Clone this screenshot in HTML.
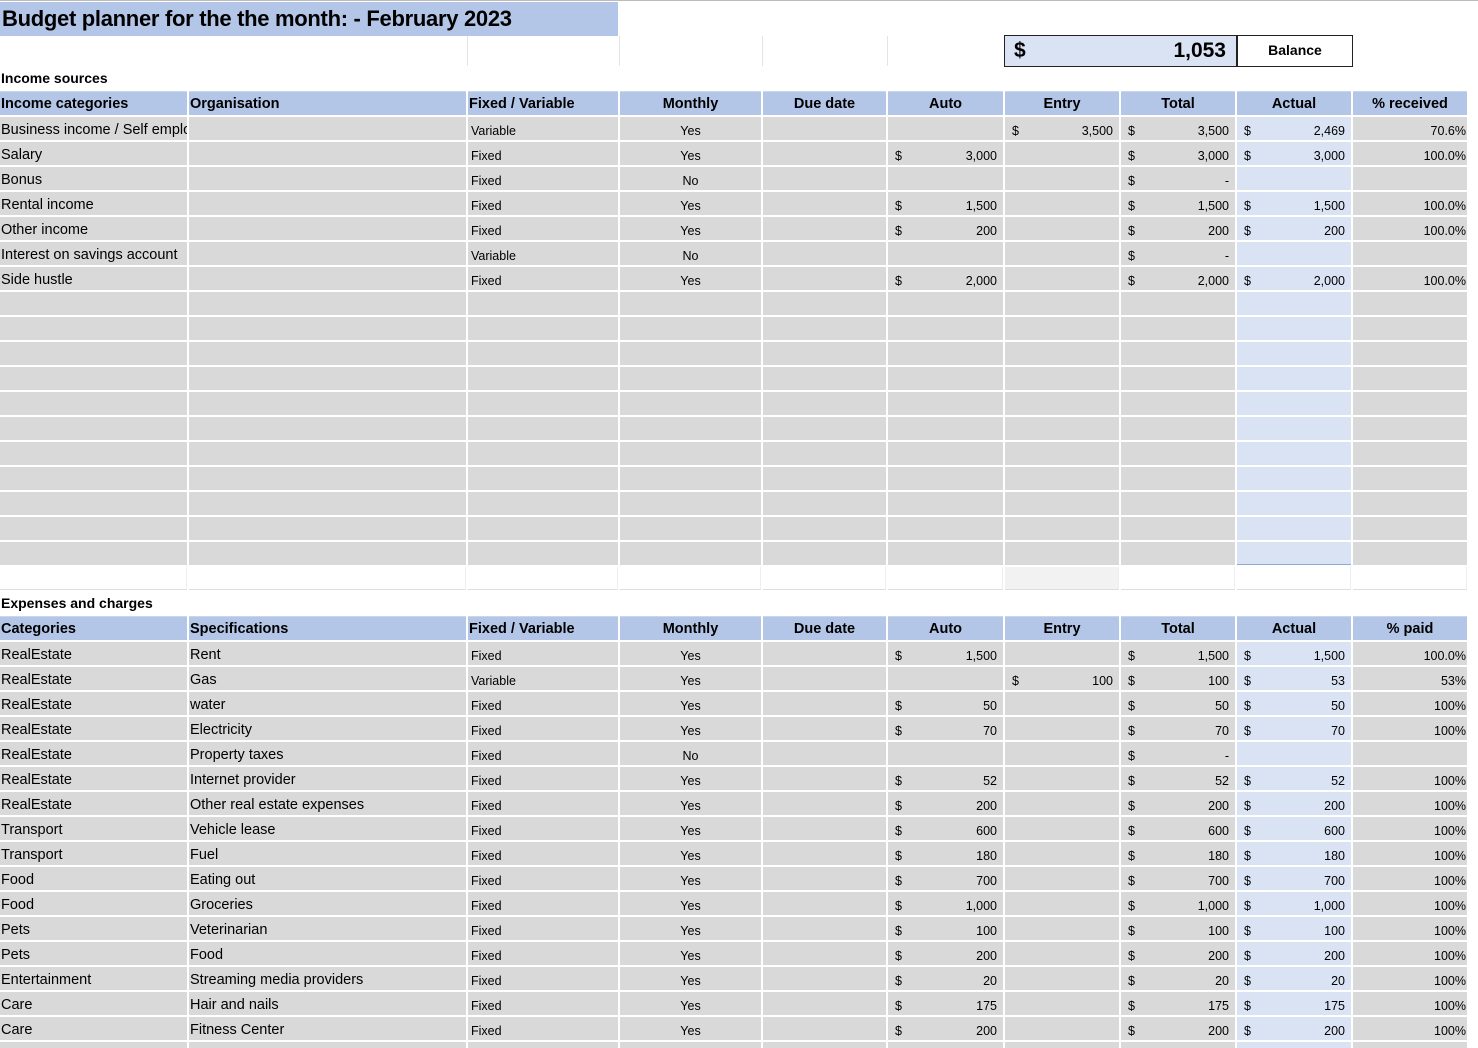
<!DOCTYPE html>
<html><head><meta charset="utf-8">
<style>
*{margin:0;padding:0;box-sizing:border-box}
html,body{width:1478px;height:1048px;overflow:hidden}
body{background:#fff;font-family:"Liberation Sans",sans-serif;color:#000;position:relative}
.title{position:absolute;left:0;top:2px;width:618px;height:34px;background:#b4c6e7;font-weight:bold;font-size:22px;line-height:34px;padding-left:2px;letter-spacing:-0.3px}
.topline{position:absolute;left:0;top:0;width:1478px;height:1px;background:#bbb}
.vl{position:absolute;top:36px;height:30px;width:1px;background:#e4e4e4}
.bal1{position:absolute;left:1004px;top:35px;width:233px;height:32px;background:#dae3f3;border:1.5px solid #222;font-weight:bold;font-size:21px;line-height:29px}
.bal1 .d{position:absolute;left:9px}
.bal1 .v{position:absolute;right:10px}
.bal2{position:absolute;left:1237px;top:35px;width:116px;height:32px;border:1.5px solid #222;font-weight:bold;font-size:14px;line-height:29px;text-align:center}
.sec{position:absolute;left:1px;font-weight:bold;font-size:14px}
table{position:absolute;left:-2px;width:1471px;border-collapse:separate;border-spacing:2px;table-layout:fixed}
td{height:23px;background:#d9d9d9;font-size:14.5px;white-space:nowrap;overflow:hidden;padding:0 1px;vertical-align:bottom;line-height:20px}
tr.h td{height:24px;background:#b4c6e7;font-weight:bold;font-size:14.5px;text-align:center;vertical-align:middle;border-top:1px solid #c9d6ee}
tr.h td.l{text-align:left}
td.s{font-size:12.5px;line-height:18px;padding-left:3px}
td.c{text-align:center;font-size:12.5px;line-height:18px}
td.a{background:#dae3f3}
td.m{font-size:12.5px;line-height:18px;padding:0 6px 0 7px}
td.m b{float:left;font-weight:normal}
td.m i{float:right;font-style:normal}
td.p{text-align:right;font-size:12.5px;line-height:18px}
tr.w td{background:#fff;border-bottom:1px solid #ddd;border-right:1px solid #eee}
</style></head><body>
<div class="topline"></div>
<div class="title">Budget planner for the the month: - February 2023</div>
<div class="vl" style="left:467px"></div><div class="vl" style="left:619px"></div><div class="vl" style="left:762px"></div><div class="vl" style="left:887px"></div>
<div class="bal1"><span class="d">$</span><span class="v">1,053</span></div>
<div class="bal2">Balance</div>
<div class="sec" style="top:70px">Income sources</div>

<table style="top:89px">
<colgroup><col style="width:187px"><col style="width:277px"><col style="width:150px"><col style="width:141px"><col style="width:123px"><col style="width:115px"><col style="width:114px"><col style="width:114px"><col style="width:114px"><col style="width:114px"></colgroup>
<tr class="h"><td class="l">Income categories</td><td class="l">Organisation</td><td class="l">Fixed / Variable</td><td>Monthly</td><td>Due date</td><td>Auto</td><td>Entry</td><td>Total</td><td>Actual</td><td>% received</td></tr>
<tr><td>Business income / Self employed</td><td></td><td class="s">Variable</td><td class="c">Yes</td><td></td><td></td><td class="m"><b>$</b><i>3,500</i></td><td class="m"><b>$</b><i>3,500</i></td><td class="m a"><b>$</b><i>2,469</i></td><td class="p">70.6%</td></tr>
<tr><td>Salary</td><td></td><td class="s">Fixed</td><td class="c">Yes</td><td></td><td class="m"><b>$</b><i>3,000</i></td><td></td><td class="m"><b>$</b><i>3,000</i></td><td class="m a"><b>$</b><i>3,000</i></td><td class="p">100.0%</td></tr>
<tr><td>Bonus</td><td></td><td class="s">Fixed</td><td class="c">No</td><td></td><td></td><td></td><td class="m"><b>$</b><i>-</i></td><td class="a"></td><td></td></tr>
<tr><td>Rental income</td><td></td><td class="s">Fixed</td><td class="c">Yes</td><td></td><td class="m"><b>$</b><i>1,500</i></td><td></td><td class="m"><b>$</b><i>1,500</i></td><td class="m a"><b>$</b><i>1,500</i></td><td class="p">100.0%</td></tr>
<tr><td>Other income</td><td></td><td class="s">Fixed</td><td class="c">Yes</td><td></td><td class="m"><b>$</b><i>200</i></td><td></td><td class="m"><b>$</b><i>200</i></td><td class="m a"><b>$</b><i>200</i></td><td class="p">100.0%</td></tr>
<tr><td>Interest on savings account</td><td></td><td class="s">Variable</td><td class="c">No</td><td></td><td></td><td></td><td class="m"><b>$</b><i>-</i></td><td class="a"></td><td></td></tr>
<tr><td>Side hustle</td><td></td><td class="s">Fixed</td><td class="c">Yes</td><td></td><td class="m"><b>$</b><i>2,000</i></td><td></td><td class="m"><b>$</b><i>2,000</i></td><td class="m a"><b>$</b><i>2,000</i></td><td class="p">100.0%</td></tr>
<tr><td></td><td></td><td></td><td></td><td></td><td></td><td></td><td></td><td class="a"></td><td></td></tr>
<tr><td></td><td></td><td></td><td></td><td></td><td></td><td></td><td></td><td class="a"></td><td></td></tr>
<tr><td></td><td></td><td></td><td></td><td></td><td></td><td></td><td></td><td class="a"></td><td></td></tr>
<tr><td></td><td></td><td></td><td></td><td></td><td></td><td></td><td></td><td class="a"></td><td></td></tr>
<tr><td></td><td></td><td></td><td></td><td></td><td></td><td></td><td></td><td class="a"></td><td></td></tr>
<tr><td></td><td></td><td></td><td></td><td></td><td></td><td></td><td></td><td class="a"></td><td></td></tr>
<tr><td></td><td></td><td></td><td></td><td></td><td></td><td></td><td></td><td class="a"></td><td></td></tr>
<tr><td></td><td></td><td></td><td></td><td></td><td></td><td></td><td></td><td class="a"></td><td></td></tr>
<tr><td></td><td></td><td></td><td></td><td></td><td></td><td></td><td></td><td class="a"></td><td></td></tr>
<tr><td></td><td></td><td></td><td></td><td></td><td></td><td></td><td></td><td class="a"></td><td></td></tr>
<tr><td></td><td></td><td></td><td></td><td></td><td></td><td></td><td></td><td class="a" style="border-bottom:1px solid #8ea9db"></td><td></td></tr>
<tr class="w"><td></td><td></td><td></td><td></td><td></td><td></td><td style="background:#f2f2f2"></td><td></td><td></td><td></td></tr>
</table>

<div class="sec" style="top:595px">Expenses and charges</div>

<table style="top:614px">
<colgroup><col style="width:187px"><col style="width:277px"><col style="width:150px"><col style="width:141px"><col style="width:123px"><col style="width:115px"><col style="width:114px"><col style="width:114px"><col style="width:114px"><col style="width:114px"></colgroup>
<tr class="h"><td class="l">Categories</td><td class="l">Specifications</td><td class="l">Fixed / Variable</td><td>Monthly</td><td>Due date</td><td>Auto</td><td>Entry</td><td>Total</td><td>Actual</td><td>% paid</td></tr>
<tr><td>RealEstate</td><td>Rent</td><td class="s">Fixed</td><td class="c">Yes</td><td></td><td class="m"><b>$</b><i>1,500</i></td><td></td><td class="m"><b>$</b><i>1,500</i></td><td class="m a"><b>$</b><i>1,500</i></td><td class="p">100.0%</td></tr>
<tr><td>RealEstate</td><td>Gas</td><td class="s">Variable</td><td class="c">Yes</td><td></td><td></td><td class="m"><b>$</b><i>100</i></td><td class="m"><b>$</b><i>100</i></td><td class="m a"><b>$</b><i>53</i></td><td class="p">53%</td></tr>
<tr><td>RealEstate</td><td>water</td><td class="s">Fixed</td><td class="c">Yes</td><td></td><td class="m"><b>$</b><i>50</i></td><td></td><td class="m"><b>$</b><i>50</i></td><td class="m a"><b>$</b><i>50</i></td><td class="p">100%</td></tr>
<tr><td>RealEstate</td><td>Electricity</td><td class="s">Fixed</td><td class="c">Yes</td><td></td><td class="m"><b>$</b><i>70</i></td><td></td><td class="m"><b>$</b><i>70</i></td><td class="m a"><b>$</b><i>70</i></td><td class="p">100%</td></tr>
<tr><td>RealEstate</td><td>Property taxes</td><td class="s">Fixed</td><td class="c">No</td><td></td><td></td><td></td><td class="m"><b>$</b><i>-</i></td><td class="a"></td><td></td></tr>
<tr><td>RealEstate</td><td>Internet provider</td><td class="s">Fixed</td><td class="c">Yes</td><td></td><td class="m"><b>$</b><i>52</i></td><td></td><td class="m"><b>$</b><i>52</i></td><td class="m a"><b>$</b><i>52</i></td><td class="p">100%</td></tr>
<tr><td>RealEstate</td><td>Other real estate expenses</td><td class="s">Fixed</td><td class="c">Yes</td><td></td><td class="m"><b>$</b><i>200</i></td><td></td><td class="m"><b>$</b><i>200</i></td><td class="m a"><b>$</b><i>200</i></td><td class="p">100%</td></tr>
<tr><td>Transport</td><td>Vehicle lease</td><td class="s">Fixed</td><td class="c">Yes</td><td></td><td class="m"><b>$</b><i>600</i></td><td></td><td class="m"><b>$</b><i>600</i></td><td class="m a"><b>$</b><i>600</i></td><td class="p">100%</td></tr>
<tr><td>Transport</td><td>Fuel</td><td class="s">Fixed</td><td class="c">Yes</td><td></td><td class="m"><b>$</b><i>180</i></td><td></td><td class="m"><b>$</b><i>180</i></td><td class="m a"><b>$</b><i>180</i></td><td class="p">100%</td></tr>
<tr><td>Food</td><td>Eating out</td><td class="s">Fixed</td><td class="c">Yes</td><td></td><td class="m"><b>$</b><i>700</i></td><td></td><td class="m"><b>$</b><i>700</i></td><td class="m a"><b>$</b><i>700</i></td><td class="p">100%</td></tr>
<tr><td>Food</td><td>Groceries</td><td class="s">Fixed</td><td class="c">Yes</td><td></td><td class="m"><b>$</b><i>1,000</i></td><td></td><td class="m"><b>$</b><i>1,000</i></td><td class="m a"><b>$</b><i>1,000</i></td><td class="p">100%</td></tr>
<tr><td>Pets</td><td>Veterinarian</td><td class="s">Fixed</td><td class="c">Yes</td><td></td><td class="m"><b>$</b><i>100</i></td><td></td><td class="m"><b>$</b><i>100</i></td><td class="m a"><b>$</b><i>100</i></td><td class="p">100%</td></tr>
<tr><td>Pets</td><td>Food</td><td class="s">Fixed</td><td class="c">Yes</td><td></td><td class="m"><b>$</b><i>200</i></td><td></td><td class="m"><b>$</b><i>200</i></td><td class="m a"><b>$</b><i>200</i></td><td class="p">100%</td></tr>
<tr><td>Entertainment</td><td>Streaming media providers</td><td class="s">Fixed</td><td class="c">Yes</td><td></td><td class="m"><b>$</b><i>20</i></td><td></td><td class="m"><b>$</b><i>20</i></td><td class="m a"><b>$</b><i>20</i></td><td class="p">100%</td></tr>
<tr><td>Care</td><td>Hair and nails</td><td class="s">Fixed</td><td class="c">Yes</td><td></td><td class="m"><b>$</b><i>175</i></td><td></td><td class="m"><b>$</b><i>175</i></td><td class="m a"><b>$</b><i>175</i></td><td class="p">100%</td></tr>
<tr><td>Care</td><td>Fitness Center</td><td class="s">Fixed</td><td class="c">Yes</td><td></td><td class="m"><b>$</b><i>200</i></td><td></td><td class="m"><b>$</b><i>200</i></td><td class="m a"><b>$</b><i>200</i></td><td class="p">100%</td></tr>
<tr><td></td><td></td><td></td><td></td><td></td><td></td><td></td><td></td><td class="a"></td><td></td></tr>
</table>
</body></html>
